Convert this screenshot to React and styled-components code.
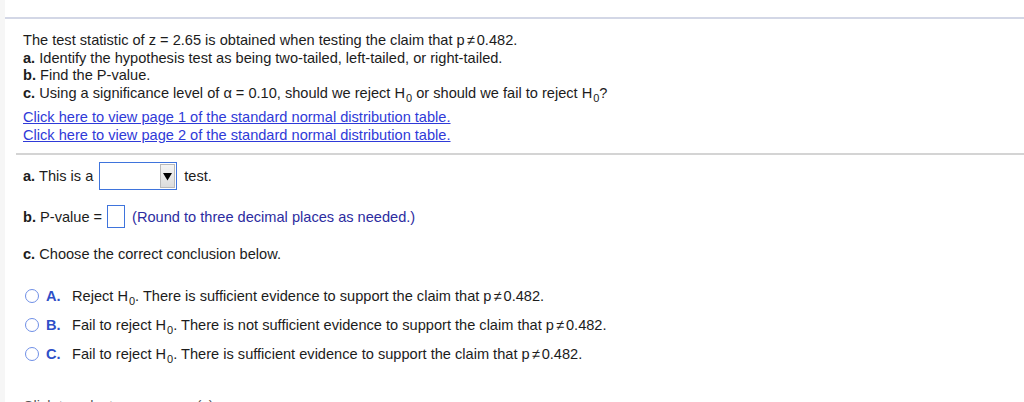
import React from 'react'
import styled, { createGlobalStyle } from 'styled-components'

const GlobalStyle = createGlobalStyle`
  html, body {
    margin: 0;
    padding: 0;
    background: #fff;
  }
  body {
    font-family: "Liberation Sans", Arial, sans-serif;
    font-size: 14.6px;
    color: #1c1c1c;
    overflow: hidden;
  }
`

const Page = styled.div`
  display: flex;
  height: 402px;
  overflow: hidden;
`

const Gutter = styled.div`
  width: 5px;
  background: #f6f6f6;
  flex-shrink: 0;
`

const Main = styled.div`
  flex: 1;
  padding-top: 17px;
`

const Rule = styled.div`
  height: 2px;
  background: ${p => p.$tone || '#d3d7e6'};
  margin-left: ${p => p.$indent || 0}px;
`

const Question = styled.div`
  padding: 12px 0 9px 18px;
  line-height: 18px;
`

const Line = styled.div`
  height: ${p => p.$h || 18}px;
  line-height: ${p => p.$h || 18}px;
  white-space: nowrap;
`

const Tag = styled.b`
  font-weight: bold;
`

const Sub = styled.sub`
  font-size: 11px;
  line-height: 0;
  vertical-align: -4px;
  margin-left: 1px;
`

const Ne = styled.span`
  margin: 0 2px;
`

const Links = styled.div`
  margin-top: 6px;
`

const Link = styled.a`
  display: block;
  color: #2f3ad8;
  text-decoration: underline;
  line-height: 18px;
  cursor: pointer;
`

const Answers = styled.div`
  padding: 7px 0 0 18px;
`

const Row = styled.div`
  display: flex;
  align-items: center;
  height: ${p => p.$h}px;
  margin-bottom: ${p => p.$mb || 0}px;
  white-space: nowrap;
`

const Select = styled.div`
  width: 78px;
  height: 28px;
  box-sizing: border-box;
  border: 1.5px solid #3f74dc;
  margin: 0 7px 0 6px;
  display: flex;
  justify-content: flex-end;
  align-items: center;
  padding-right: 1px;
`

const SelectButton = styled.div`
  width: 15px;
  height: 24px;
  box-sizing: border-box;
  border: 1px solid #b9b9b9;
  background: linear-gradient(#f4f4f4, #dcdcdc);
  display: flex;
  align-items: center;
  justify-content: center;
`

const Input = styled.div`
  width: 18px;
  height: 23px;
  box-sizing: border-box;
  border: 1.5px solid #3f74dc;
  margin: 0 7px 0 5px;
`

const Note = styled.span`
  color: #2c2ca0;
`

const Options = styled.div`
  padding: 24px 0 0 2px;
  display: flex;
  flex-direction: column;
  gap: 11px;
`

const Option = styled.div`
  display: flex;
  align-items: center;
  height: 18px;
  white-space: nowrap;
`

const Radio = styled.span`
  width: 14px;
  height: 14px;
  box-sizing: border-box;
  border: 1.6px solid #6f8fe6;
  border-radius: 50%;
  margin-right: 7px;
`

const Letter = styled.span`
  color: #2f4fc8;
  font-weight: bold;
  width: 26px;
`

const Footer = styled.div`
  padding: 35px 0 0 18px;
  color: #555;
`

const NotEq = () => <Ne>{'\u2260'}</Ne>
const H0 = () => <>H<Sub>0</Sub></>

const options = [
  ['A.', <>Reject <H0 />. There is sufficient evidence to support the claim that p<NotEq />0.482.</>],
  ['B.', <>Fail to reject <H0 />. There is not sufficient evidence to support the claim that p<NotEq />0.482.</>],
  ['C.', <>Fail to reject <H0 />. There is sufficient evidence to support the claim that p<NotEq />0.482.</>],
]

export default function App() {
  return (
    <>
      <GlobalStyle />
      <Page>
        <Gutter />
        <Main>
          <Rule />
          <Question>
            <Line>The test statistic of z = 2.65 is obtained when testing the claim that p<NotEq />0.482.</Line>
            <Line><Tag>a.</Tag> Identify the hypothesis test as being two-tailed, left-tailed, or right-tailed.</Line>
            <Line $h={17}><Tag>b.</Tag> Find the P-value.</Line>
            <Line><Tag>c.</Tag> Using a significance level of {'\u03B1'} = 0.10, should we reject <H0 /> or should we fail to reject <H0 />?</Line>
            <Links>
              <Link>Click here to view page 1 of the standard normal distribution table.</Link>
              <Link>Click here to view page 2 of the standard normal distribution table.</Link>
            </Links>
          </Question>
          <Rule $tone="#d4d4d4" $indent={11} />
          <Answers>
            <Row $h={28} $mb={15}>
              <span><Tag>a.</Tag> This is a</span>
              <Select>
                <SelectButton>
                  <svg width="9" height="9" viewBox="0 0 9 9">
                    <path d="M0 1 H9 L4.5 8.5 Z" fill="#000" />
                  </svg>
                </SelectButton>
              </Select>
              <span>test.</span>
            </Row>
            <Row $h={23} $mb={17}>
              <span><Tag>b.</Tag> P-value =</span>
              <Input />
              <Note>(Round to three decimal places as needed.)</Note>
            </Row>
            <Row $h={18}>
              <span><Tag>c.</Tag> Choose the correct conclusion below.</span>
            </Row>
            <Options>
              {options.map(([l, t]) => (
                <Option key={l}>
                  <Radio />
                  <Letter>{l}</Letter>
                  <span>{t}</span>
                </Option>
              ))}
            </Options>
          </Answers>
          <Footer>Click to select your answer(s).</Footer>
        </Main>
      </Page>
    </>
  )
}
